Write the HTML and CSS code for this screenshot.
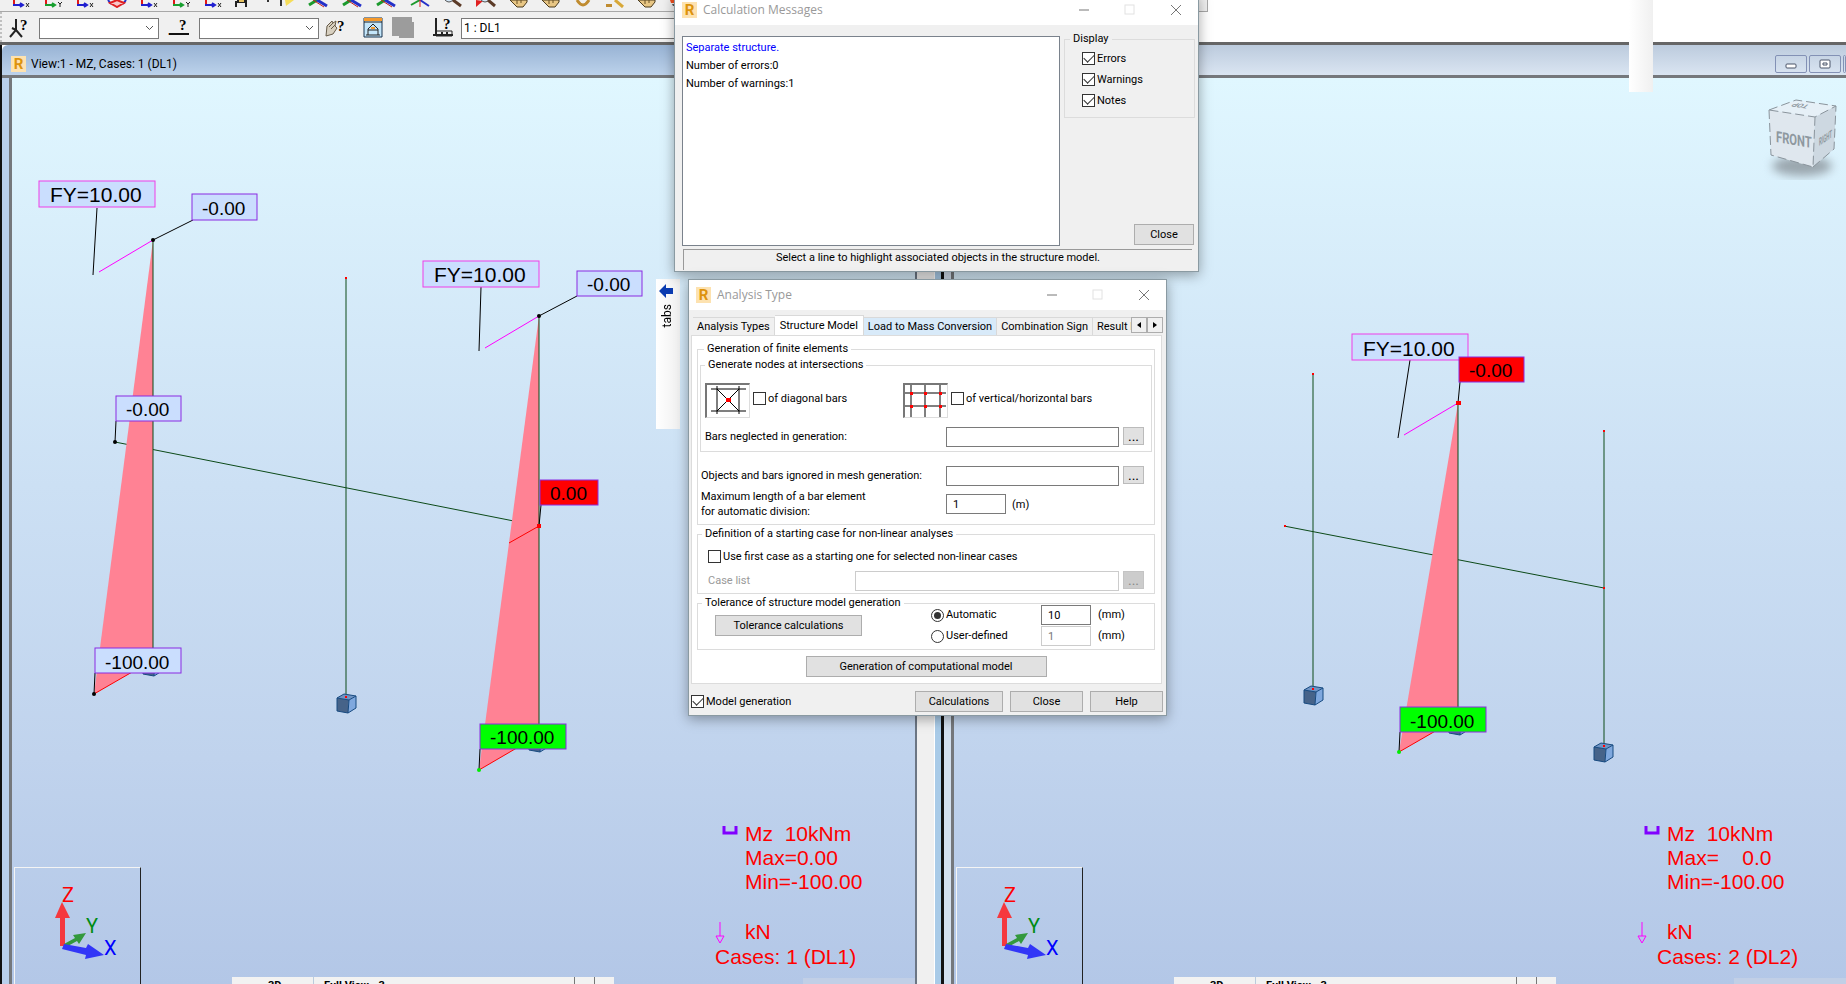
FILE: index.html
```
<!DOCTYPE html>
<html lang="en">
<head>
  <meta charset="UTF-8">
  <meta name="viewport" content="width=device-width, initial-scale=1.0">
  <title>View:1 - MZ, Cases: 1 (DL1)</title>
  <link rel="stylesheet" href="styles.css">
</head>
<body>

<!-- shared symbols -->
<svg class="defs" width="0" height="0">
  <symbol id="support" viewBox="0 0 21 21">
    <path d="M1 5 8 1 20 3 13 7z" fill="#6f94c4"/>
    <path d="M1 5 13 7 12 20 1 18z" fill="#466389"/>
    <path d="M13 7 20 3 20 15 12 20z" fill="#7fa8de"/>
    <path d="M1 5 8 1 20 3 20 15 12 20 1 18zM1 5 13 7 20 3M13 7 12 20" fill="none" stroke="#174a80"/>
  </symbol>
  <symbol id="axis-x" viewBox="0 0 20 8">
    <path d="M3 0V5" stroke="#e01818" stroke-width="2"/>
    <path d="M2 5h9M9 3l3 2-3 2" stroke="#2020d0" stroke-width="2" fill="none"/>
    <path d="M15 3l3 4M18 3l-3 4" stroke="#222"/>
  </symbol>
  <symbol id="axis-y" viewBox="0 0 20 8">
    <path d="M3 0V5" stroke="#e01818" stroke-width="2"/>
    <path d="M2 5h9M9 3l3 2-3 2" stroke="#18a030" stroke-width="2" fill="none"/>
    <path d="M15 2l2 2 2-2M17 4v3" stroke="#222" fill="none"/>
  </symbol>
  <symbol id="axes" viewBox="0 0 128 116">
    <path d="M45 78V50h-5L47 34 55 50h-5V78z" fill="#f5383e"/>
    <path d="M49 76 60 70 58 67 71 65 64 76 62 73 51 79z" fill="#33993d"/>
    <path d="M49 76 71 80 73 76 89 87 70 91 71 87 47 81z" fill="#3236f7"/>
  </symbol>
  <symbol id="hand" viewBox="0 0 20 8">
    <path d="M1 0 5 4 8 7H14L18 2V0z" fill="#e8c684" stroke="#4a3a1c"/>
    <path d="M8 0v4M12 0v3" stroke="#6a5224"/>
  </symbol>
  <symbol id="cross-axes" viewBox="0 0 22 8">
    <path d="M10 0 2 5" stroke="#1c9a2c" stroke-width="3"/>
    <path d="M10 0 20 6" stroke="#2430c8" stroke-width="3"/>
    <path d="M6 0 17 7" stroke="#c02020"/>
  </symbol>
</svg>

<header class="toolbars">
  <div class="toolbar toolbar-top">
    <button aria-label="Axes XZ"><svg width="20" height="8"><use href="#axis-x"/></svg></button>
    <button aria-label="Axes XY"><svg width="20" height="8"><use href="#axis-y"/></svg></button>
    <button aria-label="Axes YZ"><svg width="20" height="8"><use href="#axis-x"/></svg></button>
    <button aria-label="3D view"><svg width="20" height="8"><path d="M1 0l3 4M19 0l-3 4" stroke="#2430c8" stroke-width="2"/><path d="M3 3 10 0 17 3 10 7z" fill="#f8c8c8" stroke="#e02020" stroke-width="2"/></svg></button>
    <button aria-label="Plane XZ"><svg width="20" height="8"><use href="#axis-x"/></svg></button>
    <button aria-label="Plane XY"><svg width="20" height="8"><use href="#axis-y"/></svg></button>
    <button aria-label="Plane YZ"><svg width="20" height="8"><use href="#axis-x"/></svg></button>
    <button aria-label="Sections"><svg width="20" height="8"><path d="M1 7V2h10v5M3 2V0h9" fill="none" stroke="#222" stroke-width="2"/><path d="M4 0h5v2H4z" fill="#e4c060"/></svg></button>
    <button aria-label="Attributes"><svg width="28" height="8"><path d="M1 0v2M14 0v6" stroke="#333" stroke-width="2"/><path d="M18 0h9l-8 6z" fill="#f6dd58"/></svg></button>
    <button aria-label="Rotate X"><svg width="22" height="8"><use href="#cross-axes"/></svg></button>
    <button aria-label="Rotate Y"><svg width="22" height="8"><use href="#cross-axes"/></svg></button>
    <button aria-label="Rotate Z"><svg width="22" height="8"><use href="#cross-axes"/></svg></button>
    <button aria-label="Rotate all"><svg width="22" height="8"><path d="M11 0 2 5" stroke="#1c9a2c" stroke-width="2"/><path d="M11 0 20 6" stroke="#2430c8" stroke-width="2"/><path d="M11 0v7" stroke="#e02020"/></svg></button>
    <button aria-label="Zoom"><svg width="20" height="8"><path d="M2 0q4 4 8 0" fill="#d4e8f8" stroke="#555"/><path d="M10 0l8 6" stroke="#5c3b28" stroke-width="3"/></svg></button>
    <button aria-label="Zoom window"><svg width="22" height="8"><path d="M1 0v7L8 1z" fill="#e02020"/><path d="M6 0q4 4 8 0" fill="#d4e8f8" stroke="#555"/><path d="M13 0l7 6" stroke="#5c3b28" stroke-width="3"/></svg></button>
    <button aria-label="Edit window"><svg width="20" height="8"><use href="#hand"/></svg></button>
    <button aria-label="Pan"><svg width="20" height="8"><use href="#hand"/></svg></button>
    <button aria-label="Orbit"><svg width="20" height="8"><path d="M4 0q6 10 12 0" fill="none" stroke="#c08c30" stroke-width="3"/></svg></button>
    <button aria-label="Pencil"><svg width="20" height="8"><path d="M1 4h6v3H1z" fill="#c08c30"/><path d="M10 0l8 7" stroke="#d8a838" stroke-width="3"/></svg></button>
    <button aria-label="Move"><svg width="20" height="8"><use href="#hand"/></svg></button>
    <button aria-label="Stop"><svg width="14" height="8"><path d="M1 0h12v3H2z" fill="#f05020"/><path d="M3 4h11v2H4z" fill="#555"/></svg></button>
  </div>
  <div class="toolbar toolbar-select">
    <svg class="tool" width="22" height="22"><path d="M8 2v11L2 20M8 13l6 7M4 11l4 2" fill="none" stroke="#222" stroke-width="2"/><text class="question" x="12" y="13">?</text></svg>
    <select aria-label="Node selection"><option></option></select>
    <svg class="tool" width="22" height="22"><path d="M0 16h21v2H0z" fill="#e8a860"/><path d="M1 17h20" stroke="#111" stroke-width="2"/><text class="question" x="11" y="13">?</text></svg>
    <select aria-label="Bar selection"><option></option></select>
    <svg class="tool tool-hand" width="22" height="22"><path d="M2 19 3 9 8 4 9 6 12 4 11 9 13 11 9 17z" fill="#d8d0c0" stroke="#655a48"/><path d="M5 10 9 6M7 12l4-4" stroke="#655a48"/><text class="question" x="13" y="14">?</text></svg>
    <svg class="tool tool-view" width="20" height="22"><path d="M1 1h18v19H1z" fill="#c4e6fa" stroke="#16324e"/><path d="M1 1h18v3H1z" fill="#f59a2c"/><path d="M1 5h18M5 18V12l5-5 5 5v6M5 13h10M3 18h14" fill="none" stroke="#222"/><path d="M8 10h4v2H8z" fill="#f59a2c"/></svg>
    <svg class="tool tool-grey" width="22" height="22"><path d="M0 0h20v5h2v16H7v-2H0z" fill="#9c9c9c"/></svg>
    <svg class="tool" width="22" height="22"><path d="M4 1v17M1 18h20M10 15v4M15 15v4" stroke="#222" stroke-width="2"/><path d="M4 14h16v5H4" fill="none" stroke="#222"/><text class="question" x="11" y="12">?</text></svg>
    <select class="case-select" aria-label="Load case"><option>1 : DL1</option></select>
  </div>
</header>

<main class="workspace">

  <section class="view view-main">
    <div class="view-title"><span class="logo">R</span>View:1 - MZ, Cases: 1 (DL1)</div>
    <div class="view-body">
      <div class="canvas">
        <svg class="drawing">
          <g transform="translate(-12 -78)">
            <path class="bar" d="M115 442 539 526M346 279V697"/>
            <path class="moment" d="M153 240 94 694 153 660z"/>
            <path class="moment" d="M539 316 479 770 539 735z"/>
            <path class="bar" d="M153 240V660M539 316V736"/>
            <path class="edge" d="M94 694 153 660M479 770 539 735M509 543 539 526"/>
            <use href="#support" x="142" y="656" width="21" height="21"/>
            <use href="#support" x="528" y="732" width="21" height="21"/>
            <use href="#support" x="336" y="693" width="21" height="21"/>
            <path class="load" d="M99 272 153 240M485 348 539 316"/>
            <path class="leader" d="M97 208 93 275M193 220 153 240M116 421 115 442M95 673 94 694M481 287 479 351M577 296 539 316M541 505 539 526M480 749 479 770"/>
            <path d="M345 277h2v2h-2zM345 696h2v2h-2zM537 524h4v4h-4z" fill="#f00"/>
            <circle cx="153" cy="240" r="2"/>
            <circle cx="115" cy="442" r="2"/>
            <circle cx="94" cy="694" r="2"/>
            <circle cx="539" cy="316" r="2"/>
            <circle cx="479" cy="770" r="2" fill="#0e0"/>

            <rect class="tag tag-load" x="39" y="181" width="116" height="26"/>
            <text class="tag-force" x="50" y="202">FY=10.00</text>
            <rect class="tag" x="192" y="194" width="65" height="26"/>
            <text class="tag-text" x="202" y="215">-0.00</text>
            <rect class="tag" x="116" y="396" width="65" height="25"/>
            <text class="tag-text" x="126" y="416">-0.00</text>
            <rect class="tag" x="95" y="648" width="86" height="25"/>
            <text class="tag-text" x="105" y="669">-100.00</text>
            <rect class="tag tag-load" x="423" y="261" width="116" height="26"/>
            <text class="tag-force" x="434" y="282">FY=10.00</text>
            <rect class="tag" x="577" y="271" width="65" height="25"/>
            <text class="tag-text" x="587" y="291">-0.00</text>
            <rect class="tag tag-max" x="540" y="480" width="58" height="25"/>
            <text class="tag-text" x="550" y="500">0.00</text>
            <rect class="tag tag-min" x="480" y="724" width="86" height="25"/>
            <text class="tag-text" x="490" y="744">-100.00</text>
          </g>
        </svg>

        <div class="axes-box">
          <svg width="126" height="116">
            <use href="#axes" width="128" height="116"/>
            <text class="axis-z" x="47" y="34">Z</text>
            <text class="axis-y" x="71" y="65">Y</text>
            <text class="axis-x" x="89" y="87">X</text>
          </svg>
        </div>
        <div class="legend">
          <svg class="legend-moment" width="16" height="10"><path d="M2 0v7h12V0" fill="none" stroke="#8000ff" stroke-width="3"/></svg>
          <pre>Mz  10kNm
Max=0.00
Min=-100.00</pre>
          <svg class="legend-load" width="10" height="24"><path d="M5 1v14M1 15h8L5 22z" fill="none" stroke="#f0f"/></svg>
          <pre>kN</pre>
          <div class="legend-cases">Cases: 1 (DL1)</div>
        </div>
        <div class="view-status">
          <span class="status-mode">3D</span><span class="status-view">Full View - 3</span><i></i><i></i>
        </div>
        <div class="view-ghost"></div>
      </div>
      <div class="scrollbar"></div>
    </div>
  </section>

  <section class="view view-second">
    <div class="view-title">
      <div class="view-controls">
        <button aria-label="Minimize"><svg width="12" height="10"><rect x="1" y="5" width="10" height="4" rx="1" fill="#fff" stroke="#4b5468"/></svg></button>
        <button aria-label="Restore"><svg width="12" height="10"><rect x="1" y="1" width="10" height="8" rx="1" fill="#fff" stroke="#4b5468"/><path d="M4 4h4v2H4z" fill="none" stroke="#4b5468"/></svg></button>
        <button aria-label="Close view"></button>
      </div>
    </div>
    <div class="view-body">
      <div class="canvas">
        <svg class="drawing">
          <g transform="translate(-954 -78)">
            <path class="bar" d="M1284 526 1604 588M1313 374V688M1604 432V746"/>
            <path class="moment" d="M1458 403 1399 752 1458 718z"/>
            <path class="bar" d="M1458 403V718"/>
            <path class="edge" d="M1399 752 1458 718"/>
            <use href="#support" x="1448" y="715" width="21" height="21"/>
            <use href="#support" x="1303" y="685" width="21" height="21"/>
            <use href="#support" x="1593" y="742" width="21" height="21"/>
            <path class="load" d="M1404 435 1458 403"/>
            <path class="leader" d="M1410 360 1398 438M1460 382 1458 403M1400 732 1399 752"/>
            <path d="M1312 373h2v2h-2zM1603 430h2v2h-2zM1284 525h2v2h-2zM1603 587h2v2h-2zM1312 688h2v2h-2zM1603 745h2v2h-2zM1456 401h5v4h-5z" fill="#f00"/>
            <circle cx="1399" cy="752" r="2" fill="#0e0"/>

            <rect class="tag tag-load" x="1352" y="334" width="116" height="26"/>
            <text class="tag-force" x="1363" y="356">FY=10.00</text>
            <rect class="tag tag-max" x="1459" y="357" width="65" height="25"/>
            <text class="tag-text" x="1469" y="377">-0.00</text>
            <rect class="tag tag-min" x="1400" y="707" width="86" height="25"/>
            <text class="tag-text" x="1410" y="728">-100.00</text>
          </g>
        </svg>

        <!-- view cube -->
        <svg class="view-cube" width="90" height="90">
          <ellipse class="cube-shadow" cx="46" cy="76" rx="30" ry="10"/>
          <path d="M13 20 40 10 80 16 59 27z" fill="#e6f0f7"/>
          <path d="M13 20 59 27 57 77 15 65z" fill="#dfe7ee"/>
          <path d="M59 27 80 16 78 59 57 77z" fill="#cdd8e1"/>
          <path d="M13 20 40 10 80 16 59 27zM13 20 15 65 57 77 59 27M57 77 78 59 80 16" fill="none" stroke="#8a949c" stroke-dasharray="9 4"/>
          <text class="cube-front" transform="matrix(.8 .13 0 1.1 20 52)">FRONT</text>
          <text class="cube-side" transform="matrix(.45 -.3 0 1.1 63 56)">RIGHT</text>
          <text class="cube-top" transform="matrix(-.8 -.12 .6 -.5 54 15)">TOP</text>
        </svg>

        <div class="axes-box">
          <svg width="126" height="116">
            <use href="#axes" width="128" height="116"/>
            <text class="axis-z" x="47" y="34">Z</text>
            <text class="axis-y" x="71" y="65">Y</text>
            <text class="axis-x" x="89" y="87">X</text>
          </svg>
        </div>
        <div class="legend">
          <svg class="legend-moment" width="16" height="10"><path d="M2 0v7h12V0" fill="none" stroke="#8000ff" stroke-width="3"/></svg>
          <pre>Mz  10kNm
Max=    0.0
Min=-100.00</pre>
          <svg class="legend-load" width="10" height="24"><path d="M5 1v14M1 15h8L5 22z" fill="none" stroke="#f0f"/></svg>
          <pre>kN</pre>
          <div class="legend-cases">Cases: 2 (DL2)</div>
        </div>
        <div class="view-status">
          <span class="status-mode">3D</span><span class="status-view">Full View - 3</span><i></i><i></i>
        </div>
        <div class="view-ghost"></div>
      </div>
    </div>
  </section>
</main>

<aside class="tabs-panel">
  <svg width="14" height="14"><path d="M0 7 7 0v4h7v6H7v4z" fill="#0a3bb0"/></svg>
  <span>tabs</span>
</aside>
<div class="side-panel"></div>

<!-- Calculation Messages -->
<section class="dialog messages">
  <div class="dialog-title">
    <span class="logo">R</span><h2>Calculation Messages</h2>
    <button aria-label="Minimize"><svg width="12" height="12"><path d="M1 6h10" stroke="#777"/></svg></button>
    <button aria-label="Maximize" disabled><svg width="12" height="12"><rect x="1" y="1" width="9" height="9" fill="none" stroke="#e2e2e2"/></svg></button>
    <button aria-label="Close window"><svg width="12" height="12"><path d="M1 1l10 10M11 1 1 11" stroke="#777"/></svg></button>
  </div>
  <div class="messages-body">
    <ul class="message-list">
      <li class="selected">Separate structure.</li>
      <li>Number of errors:0</li>
      <li>Number of warnings:1</li>
    </ul>
    <div class="messages-side">
      <fieldset>
        <legend>Display</legend>
        <label><input type="checkbox" checked>Errors</label>
        <label><input type="checkbox" checked>Warnings</label>
        <label><input type="checkbox" checked>Notes</label>
      </fieldset>
      <button class="btn">Close</button>
    </div>
  </div>
  <div class="messages-status">Select a line to highlight associated objects in the structure model.</div>
</section>

<!-- Analysis Type -->
<section class="dialog analysis">
  <div class="dialog-title">
    <span class="logo">R</span><h2>Analysis Type</h2>
    <button aria-label="Minimize"><svg width="12" height="12"><path d="M1 6h10" stroke="#777"/></svg></button>
    <button aria-label="Maximize" disabled><svg width="12" height="12"><rect x="1" y="1" width="9" height="9" fill="none" stroke="#e2e2e2"/></svg></button>
    <button aria-label="Close window"><svg width="12" height="12"><path d="M1 1l10 10M11 1 1 11" stroke="#777"/></svg></button>
  </div>

  <div class="tab-row">
    <div class="tab-strip" role="tablist">
      <button role="tab">Analysis Types</button>
      <button role="tab" class="active" aria-selected="true">Structure Model</button>
      <button role="tab" class="hover">Load to Mass Conversion</button>
      <button role="tab">Combination Sign</button>
      <button role="tab">Result Filters</button>
    </div>
    <button class="tab-scroll" aria-label="Previous tabs"><svg width="4" height="6"><path d="M4 0v6L0 3z"/></svg></button>
    <button class="tab-scroll" aria-label="Next tabs"><svg width="4" height="6"><path d="M0 0v6l4-3z"/></svg></button>
  </div>

  <div class="tab-panel">
    <fieldset class="group-elements">
      <legend>Generation of finite elements</legend>
      <fieldset class="group-nodes">
        <legend>Generate nodes at intersections</legend>
        <div class="intersections">
          <div class="option">
            <svg class="picture" width="45" height="35"><path d="M4 4h35M4 26h35M10 1v28M32 1v28M10 4l22 22M32 4 10 26" fill="none" stroke="#000"/><path d="M19 13h5v4h-5z" fill="#f00"/></svg>
            <label><input type="checkbox">of diagonal bars</label>
          </div>
          <div class="option">
            <svg class="picture" width="45" height="35"><path d="M0 8h41M0 21h41M6 0v32M20 0v32M35 0v32" stroke="#000"/><path d="M5 7h3v3H5zM19 7h3v3h-3zM34 7h3v3h-3zM5 20h3v3H5zM19 20h3v3h-3zM34 20h3v3h-3z" fill="#f00"/></svg>
            <label><input type="checkbox">of vertical/horizontal bars</label>
          </div>
        </div>
        <div class="field">
          <label for="neglected">Bars neglected in generation:</label>
          <input type="text" id="neglected">
          <button class="more" aria-label="Choose bars">...</button>
        </div>
      </fieldset>
      <div class="outer-fields">
        <div class="field">
          <label for="ignored">Objects and bars ignored in mesh generation:</label>
          <input type="text" id="ignored">
          <button class="more" aria-label="Choose objects">...</button>
        </div>
        <div class="field">
          <label for="maxlength">Maximum length of a bar element<br>for automatic division:</label>
          <div class="with-unit"><input type="text" id="maxlength" value="1">(m)</div>
        </div>
      </div>
    </fieldset>

    <fieldset class="group-case">
      <legend>Definition of a starting case for non-linear analyses</legend>
      <label><input type="checkbox">Use first case as a starting one for selected non-linear cases</label>
      <div class="field field-wide">
        <label for="caselist">Case list</label>
        <input type="text" id="caselist" disabled>
        <button class="more" aria-label="Choose cases" disabled>...</button>
      </div>
    </fieldset>

    <fieldset class="group-tolerance">
      <legend>Tolerance of structure model generation</legend>
      <div class="tolerance">
        <button class="btn">Tolerance calculations</button>
        <div class="tolerance-values">
          <label><input type="radio" name="tolerance" checked>Automatic</label>
          <input type="text" aria-label="Automatic tolerance" value="10"><span>(mm)</span>
          <label><input type="radio" name="tolerance">User-defined</label>
          <input type="text" aria-label="User-defined tolerance" value="1" disabled><span>(mm)</span>
        </div>
      </div>
    </fieldset>

    <button class="btn btn-generate">Generation of computational model</button>
  </div>

  <div class="dialog-footer">
    <label><input type="checkbox" checked>Model generation</label>
    <button class="btn btn-calc">Calculations</button>
    <button class="btn">Close</button>
    <button class="btn">Help</button>
  </div>
</section>

</body>
</html>
```
FILE: styles.css
```
* {
  box-sizing: border-box;
}
body {
  margin: 0;
  height: 100vh;
  display: flex;
  flex-direction: column;
  position: relative;
  overflow: hidden;
  background-color: #fff;
  color: #000;
  font-family: Roboto, "Liberation Sans", sans-serif;
  font-size: 11px;
  line-height: 12px;
}
button,
input,
select {
  font: inherit;
  color: inherit;
  margin: 0;
  padding: 0;
}
button {
  border: none;
  background: none;
}
svg {
  display: block;
}
.defs {
  position: absolute;
}
.logo {
  width: 15px;
  height: 16px;
  flex: none;
  background-color: #fde2b0;
  color: #dd930c;
  font-size: 15px;
  font-weight: bold;
  line-height: 16px;
  text-align: center;
}

/* toolbars */
.toolbars {
  height: 42px;
  flex: none;
}
.toolbar {
  display: flex;
  background-color: #f0f0f0;
}
.toolbar-top {
  width: 1208px;
  height: 12px;
  gap: 12px;
  padding-left: 11px;
  border-bottom: 1px solid #a8a8a8;
  border-right: 1px solid #a8a8a8;
}
.toolbar-top button {
  height: 8px;
}
.toolbar-select {
  width: 1190px;
  height: 30px;
  align-items: center;
  gap: 9px;
  padding-top: 2px;
  padding-left: 6px;
  border-left: 2px dotted #c0c0c0;
}
.toolbar-select select {
  width: 120px;
  height: 21px;
  appearance: none;
  border: 1px solid #7a7a7a;
  background: #fff url("data:image/svg+xml,%3Csvg xmlns='http://www.w3.org/2000/svg' width='9' height='6'%3E%3Cpath d='M1 1l3.500 3.500L8 1' fill='none' stroke='%23555'/%3E%3C/svg%3E") no-repeat right 4px center;
  padding-left: 2px;
}
.toolbar-select .case-select {
  width: 400px;
  margin-left: -2px;
  font-size: 12px;
}
.tool {
  flex: none;
}
.tool-hand {
  margin-left: -4px;
}
.tool-view {
  margin-left: 8px;
}
.tool-grey {
  margin-right: 9px;
}
.question {
  font-family: "Liberation Serif", serif;
  font-size: 15px;
  font-weight: bold;
}

/* views */
.workspace {
  flex: 1;
  min-height: 0;
  display: grid;
  grid-template-columns: 944fr 902fr;
  border-top: 3px solid #666;
}
.view {
  min-width: 0;
  display: flex;
  flex-direction: column;
}
.view-main {
  border-left: 2px solid #111;
  border-right: 3px solid #111;
}
.view-title {
  height: 33px;
  flex: none;
  display: flex;
  align-items: center;
  gap: 5px;
  padding: 7px 0 0 9px;
  background: linear-gradient(#98b3d4, #bcd2eb);
  border-bottom: 3px solid #75787c;
  font-size: 12px;
}
.view-main .view-title {
  border-top-left-radius: 6px;
}
.view-second .view-title {
  background: linear-gradient(#bccbdd, #dae5f2);
}
.view-controls {
  margin-left: auto;
  display: flex;
  gap: 2px;
  overflow: hidden;
}
.view-controls button {
  width: 32px;
  height: 18px;
  flex: none;
  display: flex;
  align-items: center;
  justify-content: center;
  border: 1px solid #8391b5;
  border-radius: 2px;
}
.view-controls button:last-child {
  width: 3px;
}
.view-body {
  flex: 1;
  min-height: 0;
  display: flex;
  border-left: 7px solid #b9d0ec;
}
.view-main .view-body {
  border-right: 6px solid #a9cbe8;
}
.view-second .view-body {
  border-left-color: #d2dfee;
}
.canvas {
  flex: 1;
  min-width: 0;
  position: relative;
  overflow: hidden;
  border-left: 3px solid #75787c;
  background: linear-gradient(#e0f7ff, #cce0f4 45%, #c0d3ed 75%, #b3c7e7);
}
.scrollbar {
  width: 20px;
  background-color: #f0f0f0;
  border-left: 2px solid #6c7684;
  border-right: 1px solid #fff;
}
.drawing {
  position: absolute;
  width: 100%;
  height: 100%;
}
.bar {
  fill: none;
  stroke: #0c4a18;
}
.moment {
  fill: #ff8294;
}
.edge {
  fill: none;
  stroke: #f00;
}
.load {
  fill: none;
  stroke: #f0f;
}
.leader {
  fill: none;
  stroke: #000;
}
.tag {
  fill: #cadefe;
  stroke: #8a2be2;
}
.tag-load {
  stroke: #f03ce8;
}
.tag-max {
  fill: #f00;
}
.tag-min {
  fill: #0f0;
}
.tag-text,
.tag-force,
.legend,
.legend pre {
  font-family: "Liberation Sans", Arial, sans-serif;
}
.tag-text {
  font-size: 19px;
}
.tag-force {
  font-size: 21px;
}
.view-cube {
  position: absolute;
  top: 12px;
  right: 0;
}
.cube-shadow {
  fill: #9aa6ae;
  filter: blur(5px);
}
.view-cube text {
  font-family: Roboto, sans-serif;
  font-weight: bold;
  fill: #8e989f;
}
.cube-front {
  font-size: 14px;
}
.cube-side,
.cube-top {
  font-size: 10px;
}
.axes-box {
  position: absolute;
  left: 2px;
  bottom: 0;
  width: 127px;
  height: 117px;
  border-top: 1px solid #f4f4f4;
  border-left: 1px solid #f4f4f4;
  border-right: 1px solid #222;
}
.axes-box text {
  font-family: Roboto, sans-serif;
  font-size: 20px;
}
.axis-x {
  fill: #00f;
}
.axis-y {
  fill: #008c14;
}
.axis-z {
  fill: #f00;
}
.legend {
  position: absolute;
  right: 42px;
  bottom: 13px;
  width: 158px;
  display: grid;
  grid-template-columns: 30px 1fr;
  row-gap: 26px;
  color: #f00;
  font-size: 21px;
  line-height: 24px;
  white-space: nowrap;
}
.view-second .legend {
  right: 51px;
}
.legend pre {
  margin: 0;
}
.legend-moment {
  margin: 4px 0 0 7px;
}
.legend-load {
  margin-top: 1px;
}
.legend-cases {
  grid-column: span 2;
  margin-top: -26px;
}
.view-second .legend-cases {
  padding-left: 20px;
}
.view-status {
  position: absolute;
  left: 220px;
  bottom: 0;
  width: 382px;
  height: 7px;
  display: flex;
  overflow: hidden;
  background-color: #f2f2f2;
  font-weight: bold;
  line-height: 14px;
}
.status-mode {
  width: 82px;
  padding-left: 36px;
  border-right: 1px solid #bcd;
  padding-top: 2px;
}
.status-view {
  flex: 1;
  padding: 2px 0 0 10px;
}
.view-status i {
  width: 20px;
  border-left: 1px solid #777;
}
.view-ghost {
  position: absolute;
  right: 0;
  bottom: 0;
  width: 112px;
  height: 6px;
  background-color: #c1cfe6;
}

/* docked panels */
.tabs-panel {
  position: absolute;
  left: 656px;
  top: 279px;
  width: 24px;
  height: 150px;
  display: flex;
  flex-direction: column;
  align-items: center;
  gap: 6px;
  padding: 5px 4px 0 0;
  background: linear-gradient(90deg, #fff, #f0f0f0);
}
.tabs-panel span {
  padding-right: 2px;
  font-size: 12px;
  writing-mode: vertical-rl;
  transform: rotate(180deg);
}
.side-panel {
  position: absolute;
  left: 1629px;
  top: 0;
  width: 24px;
  height: 92px;
  background: linear-gradient(90deg, #fff, #f0f0f0);
}

/* dialogs */
.dialog {
  position: absolute;
  background-color: #f0f0f0;
  border: 1px solid #8a9aa2;
  box-shadow: 0 3px 12px rgba(0,0,0,0.35);
}
.dialog-title {
  height: 30px;
  display: flex;
  align-items: center;
  padding: 0 16px 0 7px;
  background-color: #fff;
}
.dialog-title h2 {
  flex: 1;
  margin: 0 0 0 6px;
  color: #999;
  font-family: "Open Sans", sans-serif;
  font-size: 12px;
  font-weight: normal;
}
.dialog-title button {
  margin-left: 34px;
}
.dialog label {
  display: flex;
  align-items: center;
}
fieldset {
  min-width: 0;
  margin: 0;
  padding: 0;
  border: 1px solid #dcdcdc;
}
legend {
  margin-left: 4px;
  padding: 0 3px;
}
input[type="text"] {
  min-width: 0;
  height: 20px;
  padding: 0 6px;
  border: 1px solid #7a7a7a;
  background-color: #fff;
}
input[type="text"]:disabled {
  border-color: #ccc;
  color: #777;
}
input[type="checkbox"],
input[type="radio"] {
  appearance: none;
  width: 13px;
  height: 13px;
  flex: none;
  display: grid;
  place-items: center;
  margin-right: 2px;
  border: 1px solid #333;
  background-color: #fff;
}
input[type="checkbox"]:checked::after {
  content: "";
  width: 9px;
  height: 5px;
  margin-top: -3px;
  border: solid #333;
  border-width: 0 0 1px 1px;
  transform: rotate(-45deg);
}
input[type="radio"] {
  border-radius: 50%;
}
input[type="radio"]:checked::after {
  content: "";
  width: 7px;
  height: 7px;
  border-radius: 50%;
  background-color: #333;
}
.btn {
  height: 21px;
  border: 1px solid #adadad;
  background-color: #e1e1e1;
}
.more {
  height: 18px;
  border: 1px solid #bbb;
  background-color: #e1e1e1;
  font-size: 14px;
}
.more:disabled {
  border-color: #c4c4c4;
  background-color: #ccc;
  color: #888;
}

/* calculation messages */
.messages {
  left: 674px;
  top: -6px;
  width: 525px;
}
.messages-body {
  display: flex;
  gap: 4px;
  padding: 8px 3px 0 7px;
}
.message-list {
  flex: 1;
  min-height: 210px;
  margin: 3px 0 0;
  padding: 2px 3px;
  border: 1px solid #7a828c;
  background-color: #fff;
  list-style: none;
  line-height: 18px;
}
.message-list .selected {
  color: #00f;
}
.messages-side {
  width: 131px;
  display: flex;
  flex-direction: column;
  justify-content: space-between;
}
.messages-side fieldset {
  display: grid;
  gap: 8px;
  padding: 7px 0 10px 17px;
}
.messages-side legend {
  margin-left: -12px;
}
.messages-side .btn {
  width: 60px;
  margin: 0 1px 1px;
  align-self: flex-end;
}
.messages-status {
  margin: 3px 6px 1px 8px;
  height: 21px;
  border-top: 1px solid #999;
  border-left: 1px solid #999;
  line-height: 15px;
  text-align: center;
}

/* analysis type */
.analysis {
  left: 688px;
  top: 279px;
  width: 479px;
}
.tab-row {
  height: 20px;
  display: flex;
  margin: 5px 3px 0 4px;
}
.tab-strip {
  flex: 1;
  min-width: 0;
  display: flex;
  align-items: flex-end;
  overflow: hidden;
}
.tab-strip button {
  height: 18px;
  flex: none;
  padding: 1px 4px 0;
  border: 1px solid #d9d9d9;
  border-width: 1px 1px 0 0;
}
.tab-strip .active {
  height: 20px;
  padding: 0 5px;
  background-color: #fff;
}
.tab-strip .hover {
  background-color: #d8eaf9;
}
.tab-scroll {
  width: 16px;
  height: 16px;
  margin-top: 2px;
  display: flex;
  align-items: center;
  justify-content: center;
  border: 1px solid #adadad;
}
.tab-panel {
  margin: 0 4px 0 2px;
  padding: 7px 6px 6px 5px;
  border: 1px solid #dcdcdc;
  background-color: #fff;
}
.group-elements {
  padding: 4px 2px 5px;
}
.group-nodes {
  padding: 12px 7px 4px 4px;
}
.group-nodes legend {
  margin-left: 0;
}
.intersections {
  display: grid;
  grid-template-columns: 198px 1fr;
  margin-bottom: 9px;
}
.option {
  display: flex;
  align-items: center;
  gap: 3px;
}
.option label {
  padding-bottom: 4px;
}
.picture {
  border-top: 2px solid #777;
  border-left: 2px solid #777;
  border-right: 1px solid #ddd;
  border-bottom: 1px solid #ddd;
}
.field {
  display: grid;
  grid-template-columns: 1fr 173px 21px;
  column-gap: 4px;
}
.outer-fields {
  display: grid;
  gap: 3px;
  margin-top: 14px;
  padding: 0 8px 0 1px;
}
.outer-fields .field:last-child {
  line-height: 15px;
}
.with-unit {
  display: flex;
  align-items: center;
  gap: 6px;
}
.with-unit input {
  width: 60px;
}
.group-case {
  margin-top: 3px;
  padding: 10px 10px 2px;
}
.group-case legend,
.group-tolerance legend {
  margin-left: -6px;
}
.field-wide {
  grid-template-columns: 1fr 264px 21px;
  margin-top: 8px;
}
.field-wide label {
  color: #999;
}
.group-tolerance {
  margin-top: 3px;
  padding: 0 10px 3px;
}
.tolerance {
  display: flex;
  align-items: center;
  justify-content: space-between;
  margin-top: -4px;
}
.tolerance .btn {
  width: 147px;
  margin-left: 7px;
}
.tolerance-values {
  display: grid;
  grid-template-columns: 110px 50px 53px;
  row-gap: 1px;
  align-items: center;
}
.tolerance-values span {
  padding-left: 7px;
}
.btn-generate {
  display: block;
  width: 241px;
  margin: 6px auto 0;
}
.dialog-footer {
  display: flex;
  align-items: center;
  gap: 7px;
  padding: 7px 3px 3px 2px;
}
.dialog-footer label {
  margin-right: auto;
}
.dialog-footer .btn {
  width: 73px;
}
.dialog-footer .btn-calc {
  width: 88px;
}
```
